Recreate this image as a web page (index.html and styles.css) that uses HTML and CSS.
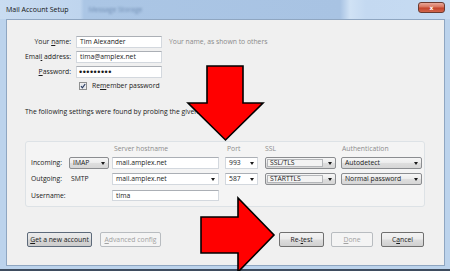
FILE: index.html
```html
<!DOCTYPE html>
<html>
<head>
<meta charset="utf-8">
<title>Mail Account Setup</title>
<link rel="stylesheet" href="styles.css">
</head>
<body>
<div class="window">
  <div class="titlebar">
    <span class="title">Mail Account Setup</span>
    <span class="ghost">Message Storage</span>
    <span class="close">x</span>
  </div>
  <div class="client">
    <div class="identity">
      <span class="lbl">Your <u>n</u>ame:</span>
      <span class="field">Tim Alexander</span>
      <span class="hint">Your name, as shown to others</span>
      <span class="lbl">Emai<u>l</u> address:</span>
      <span class="field">tima@amplex.net</span>
      <span></span>
      <span class="lbl"><u>P</u>assword:</span>
      <span class="field pw">•••••••••</span>
      <span></span>
      <span></span>
      <span class="check">
        <svg class="box" width="8" height="8" viewBox="0 0 8 8"><rect x="0.5" y="0.5" width="7" height="7" fill="#f4f4f4" stroke="#8e8f8f"/><rect x="1.5" y="1.5" width="5" height="5" fill="#e4e6ea"/><path d="M2 4.2 L3.4 5.8 L6.2 2" fill="none" stroke="#2d3f63" stroke-width="1.2"/></svg>
        <span>Re<u>m</u>ember password</span>
      </span>
    </div>
    <p class="probe">The following settings were found by probing the given server.</p>
    <div class="group">
      <span></span>
      <span></span>
      <span class="head h-host">Server hostname</span>
      <span class="head h-port">Port</span>
      <span class="head">SSL</span>
      <span class="head h-auth">Authentication</span>

      <span class="rlbl">Incoming:</span>
      <span class="ctl sel dd w-proto">IMAP</span>
      <span class="ctl field w-host">mail.amplex.net</span>
      <span class="ctl field dd w-port">993</span>
      <span class="ctl sel ssl dd w-ssl"><span class="inner">SSL/TLS</span></span>
      <span class="ctl sel dd w-auth">Autodetect</span>

      <span class="rlbl">Outgoing:</span>
      <span class="rlbl smtp">SMTP</span>
      <span class="ctl field dd w-host">mail.amplex.net</span>
      <span class="ctl field dd w-port">587</span>
      <span class="ctl sel ssl dd w-ssl"><span class="inner">STARTTLS</span></span>
      <span class="ctl sel dd w-auth">Normal password</span>

      <span class="rlbl">Username:</span>
      <span></span>
      <span class="ctl field user w-host">tima</span>
    </div>
    <div class="buttons">
      <span class="btn focus b-new"><u>G</u>et a new account</span>
      <span class="btn disabled b-adv"><u>A</u>dvanced config</span>
      <span class="spacer"></span>
      <span class="btn b-retest">Re-<u>t</u>est</span>
      <span class="btn disabled b-done"><u>D</u>one</span>
      <span class="btn b-cancel">C<u>a</u>ncel</span>
    </div>
  </div>
  <svg class="arrows" width="450" height="271" viewBox="0 0 450 271">
    <polygon points="207,66 243,66 243,103 263,103 225.5,140 188,103 207,103" fill="#ff0000" stroke="#000" stroke-width="1.6" stroke-linejoin="miter"/>
    <polygon points="201,217 238,217 238,198 274,235 238,272 238,253 201,253" fill="#ff0000" stroke="#000" stroke-width="1.6" stroke-linejoin="miter"/>
  </svg>
</div>
</body>
</html>
```

FILE: styles.css
```css
* { box-sizing: border-box; }
html, body { margin: 0; padding: 0; }
body {
  width: 450px;
  height: 271px;
  overflow: hidden;
  background: #3e4c5e;
  font-family: "Open Sans", "Liberation Sans", sans-serif;
  font-size: 6.8px;
  color: #1a1a1a;
}
u { text-decoration: underline; text-underline-offset: 1px; text-decoration-thickness: 0.6px; }

.window {
  position: relative;
  width: 450px;
  height: 269px;
  background: #bcd3ec;
  display: flex;
  flex-direction: column;
  padding: 0 5px 3px 6px;
}

.titlebar {
  height: 19px;
  margin: 0 -5px 0 -6px;
  padding-left: 6px;
  display: flex;
  align-items: center;
  background: linear-gradient(to right, #c9dcf1 0, #bfd5ee 80px, #abc6e5 84px, #a8c3e3 340px, #d0e2f5 350px, #c4d9f1 366px, #c6dbf2 450px);
}
.title { color: #141414; line-height: 10px; font-size: 7px; }
.ghost {
  margin-left: 20px;
  color: #6f8cb1;
  filter: blur(0.9px);
  line-height: 10px;
}
.close {
  margin-left: auto;
  align-self: flex-start;
  margin-top: 2px;
  margin-right: 5px;
  width: 27px;
  height: 11px;
  border: 1px solid #6b3a30;
  border-radius: 3px;
  background: linear-gradient(#e9a898 0%, #d8735d 45%, #c4442b 55%, #d2664c 100%);
  color: #fff;
  font-family: "DejaVu Sans", sans-serif;
  font-weight: bold;
  font-size: 6px;
  line-height: 9px;
  text-align: center;
}

.client {
  flex: 1;
  background: #f0f0f0;
  border: 1px solid #8fa6c1;
  padding: 16px 0 0 18px;
}

.identity {
  display: grid;
  grid-template-columns: 46px 86px auto;
  grid-template-rows: 12px 12px 12px 10px;
  column-gap: 5px;
  row-gap: 3px;
  align-items: center;
}
.lbl { text-align: right; line-height: 12px; }
.field {
  height: 12px;
  background: #fff;
  border: 1px solid #d3d8de;
  border-top-color: #abafb5;
  padding: 0 3px;
  line-height: 10px;
  display: flex;
  align-items: center;
  white-space: nowrap;
  overflow: hidden;
}
.pw {
  font-family: "Liberation Sans", sans-serif;
  font-size: 9px;
  letter-spacing: 0.5px;
  padding-left: 2px;
}
.hint { color: #8a8a8a; margin-left: 2px; line-height: 12px; }
.check {
  display: flex;
  align-items: center;
  gap: 5px;
  padding-left: 3px;
  line-height: 10px;
}
.box { display: block; flex: none; }

.probe {
  margin: 16px 0 0 0;
  line-height: 10px;
}

.group {
  margin-top: 24px;
  width: 400px;
  border: 1px solid #dde2e6;
  border-radius: 3px;
  background: #f4f4f4;
  padding: 0 2px 5px 5px;
  display: grid;
  grid-template-columns: 38px 43px 113px 40px 76px 81px;
  grid-template-rows: 15px 16px 17px 11px;
  align-items: start;
}
.head {
  color: #8c8c8c;
  line-height: 10px;
  margin-top: 2px;
}
.h-host { padding-left: 2px; }
.h-port { padding-left: 2px; }
.h-auth { padding-left: 1px; }
.rlbl { line-height: 12px; }
.smtp { padding-left: 2px; }

.ctl {
  height: 12px;
  display: flex;
  align-items: center;
  line-height: 10px;
  white-space: nowrap;
}
.ctl.user { height: 11px; }
.sel {
  border: 1px solid #8b8d90;
  border-radius: 2px;
  background: linear-gradient(#f6f6f6 0%, #ececec 48%, #dedede 52%, #d6d6d6 100%);
  padding: 0 3px 0 3px;
}
.ssl { padding: 0 3px 0 1px; }
.ssl .inner {
  flex: 1;
  height: 8px;
  border: 1px solid #b4b6b9;
  background: #f3f3f3;
  padding: 0 2px;
  line-height: 6px;
  margin-right: 5px;
  align-self: center;
}
.dd::after {
  content: "";
  margin-left: auto;
  flex: none;
  width: 0;
  height: 0;
  border-left: 2.5px solid transparent;
  border-right: 2.5px solid transparent;
  border-top: 3px solid #1a1a1a;
}
.ssl.dd::after { margin-left: 0; }
.w-proto { width: 40px; }
.w-host { width: 107px; }
.w-port { width: 33px; }
.w-ssl { width: 71px; }
.w-auth { width: 81px; }

.buttons {
  margin-top: 25px;
  width: 400px;
  display: flex;
  padding: 0 1px 0 2px;
}
.spacer { flex: 1; }
.btn {
  height: 15px;
  border: 1px solid #707070;
  border-radius: 2px;
  background: linear-gradient(#f3f3f3 0%, #ebebeb 48%, #dddddd 52%, #d0d0d0 100%);
  display: flex;
  align-items: center;
  justify-content: center;
  line-height: 10px;
  white-space: nowrap;
}
.btn.focus {
  border-color: #5d6a7a;
  background: linear-gradient(#ebebeb 0%, #e2e2e2 48%, #d5d5d5 52%, #cdcdcd 100%);
}
.btn.disabled {
  border-color: #b8bcc0;
  background: #f4f4f4;
  color: #a2a2a2;
}
.b-new { width: 65px; }
.b-adv { width: 61px; margin-left: 8px; }
.b-retest { width: 45px; }
.b-done { width: 42px; margin-left: 7px; }
.b-cancel { width: 43px; margin-left: 8px; }

.arrows {
  position: absolute;
  left: 0;
  top: 0;
  pointer-events: none;
}
```
